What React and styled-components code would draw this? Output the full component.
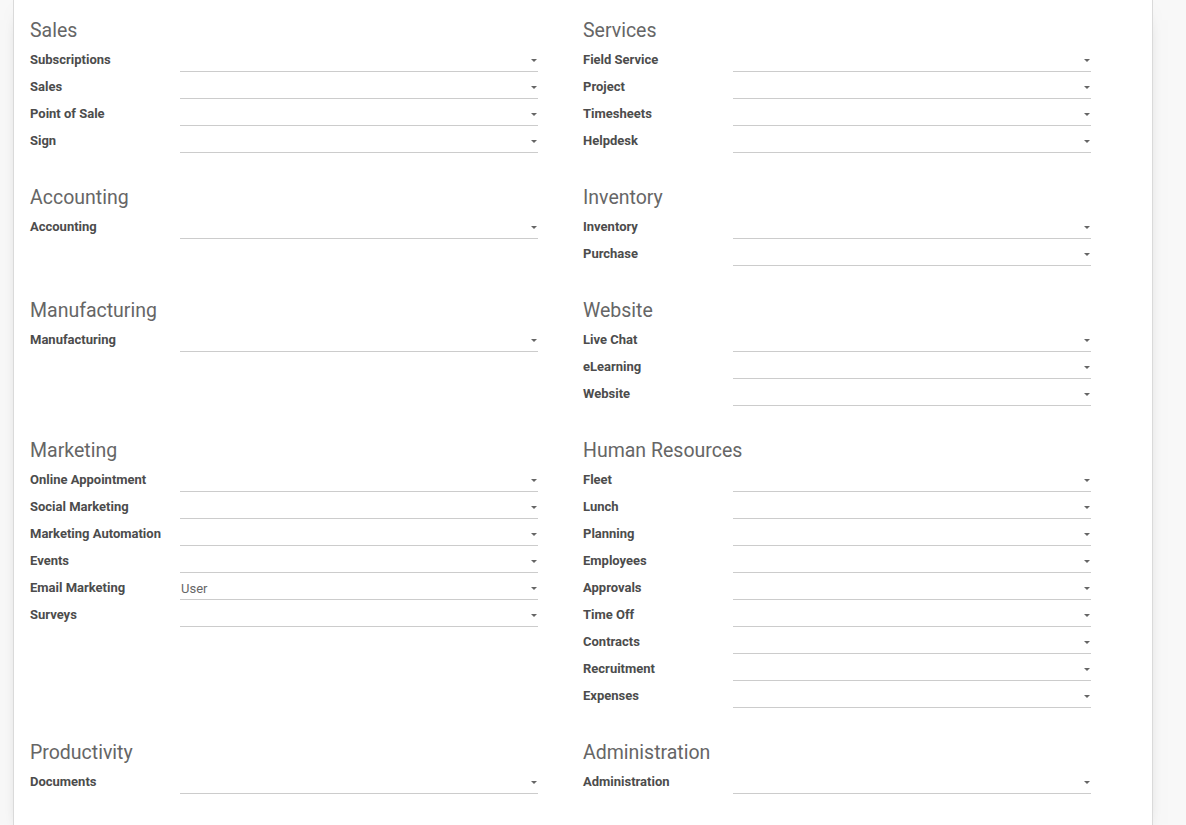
import React from "react";
import styled, { createGlobalStyle } from "styled-components";

const Global = createGlobalStyle`
  html, body { margin: 0; padding: 0; background: #f8f8f8; }
  body { font-family: Roboto, "Noto Sans", "Liberation Sans", sans-serif; }
  * { box-sizing: border-box; }
`;

const Sheet = styled.div`
  margin-left: 13px;
  width: 1140px;
  min-height: 825px;
  background: #fff;
  border-left: 1px solid #dadada;
  border-right: 1px solid #dadada;
  box-shadow: 0 5px 20px -15px rgba(0, 0, 0, 0.6);
  padding: 17px 16px 40px;
`;

const Grid = styled.div`
  display: grid;
  grid-template-columns: 553px 553px;
  row-gap: 31px;
  align-items: start;
`;

const Section = styled.section`
  display: flex;
  flex-direction: column;
`;

const Title = styled.h2`
  margin: 0 0 2px;
  padding-top: 1px;
  font-size: 19.5px;
  line-height: 25px;
  font-weight: 400;
  color: #666666;
`;

const Field = styled.div`
  display: grid;
  grid-template-columns: 150px 358px;
  height: 27px;
`;

const Label = styled.label`
  padding-top: 4px;
  font-size: 13px;
  line-height: 21px;
  font-weight: 700;
  color: #4c4c4c;
  white-space: nowrap;
`;

const Select = styled.div`
  position: relative;
  border-bottom: 1px solid #cccccc;
  padding: 5px 0 0 1px;
  font-size: 13px;
  line-height: 21px;
  color: #666666;
`;

const Caret = styled.span`
  position: absolute;
  right: 1px;
  top: 14px;
  width: 0;
  height: 0;
  border-top: 3.5px solid #666;
  border-left: 3.5px solid transparent;
  border-right: 3.5px solid transparent;
`;

const sections = [
  { title: "Sales", fields: ["Subscriptions", "Sales", "Point of Sale", "Sign"] },
  { title: "Services", fields: ["Field Service", "Project", "Timesheets", "Helpdesk"] },
  { title: "Accounting", fields: ["Accounting"] },
  { title: "Inventory", fields: ["Inventory", "Purchase"] },
  { title: "Manufacturing", fields: ["Manufacturing"] },
  { title: "Website", fields: ["Live Chat", "eLearning", "Website"] },
  {
    title: "Marketing",
    fields: [
      "Online Appointment",
      "Social Marketing",
      "Marketing Automation",
      "Events",
      ["Email Marketing", "User"],
      "Surveys",
    ],
  },
  {
    title: "Human Resources",
    fields: [
      "Fleet",
      "Lunch",
      "Planning",
      "Employees",
      "Approvals",
      "Time Off",
      "Contracts",
      "Recruitment",
      "Expenses",
    ],
  },
  { title: "Productivity", fields: ["Documents"] },
  { title: "Administration", fields: ["Administration"] },
];

export default function App() {
  return (
    <>
      <Global />
      <Sheet>
        <Grid>
          {sections.map((s) => (
            <Section key={s.title}>
              <Title>{s.title}</Title>
              {s.fields.map((f) => {
                const [label, value] = Array.isArray(f) ? f : [f, ""];
                return (
                  <Field key={label}>
                    <Label>{label}</Label>
                    <Select>
                      {value}
                      <Caret />
                    </Select>
                  </Field>
                );
              })}
            </Section>
          ))}
        </Grid>
      </Sheet>
    </>
  );
}
